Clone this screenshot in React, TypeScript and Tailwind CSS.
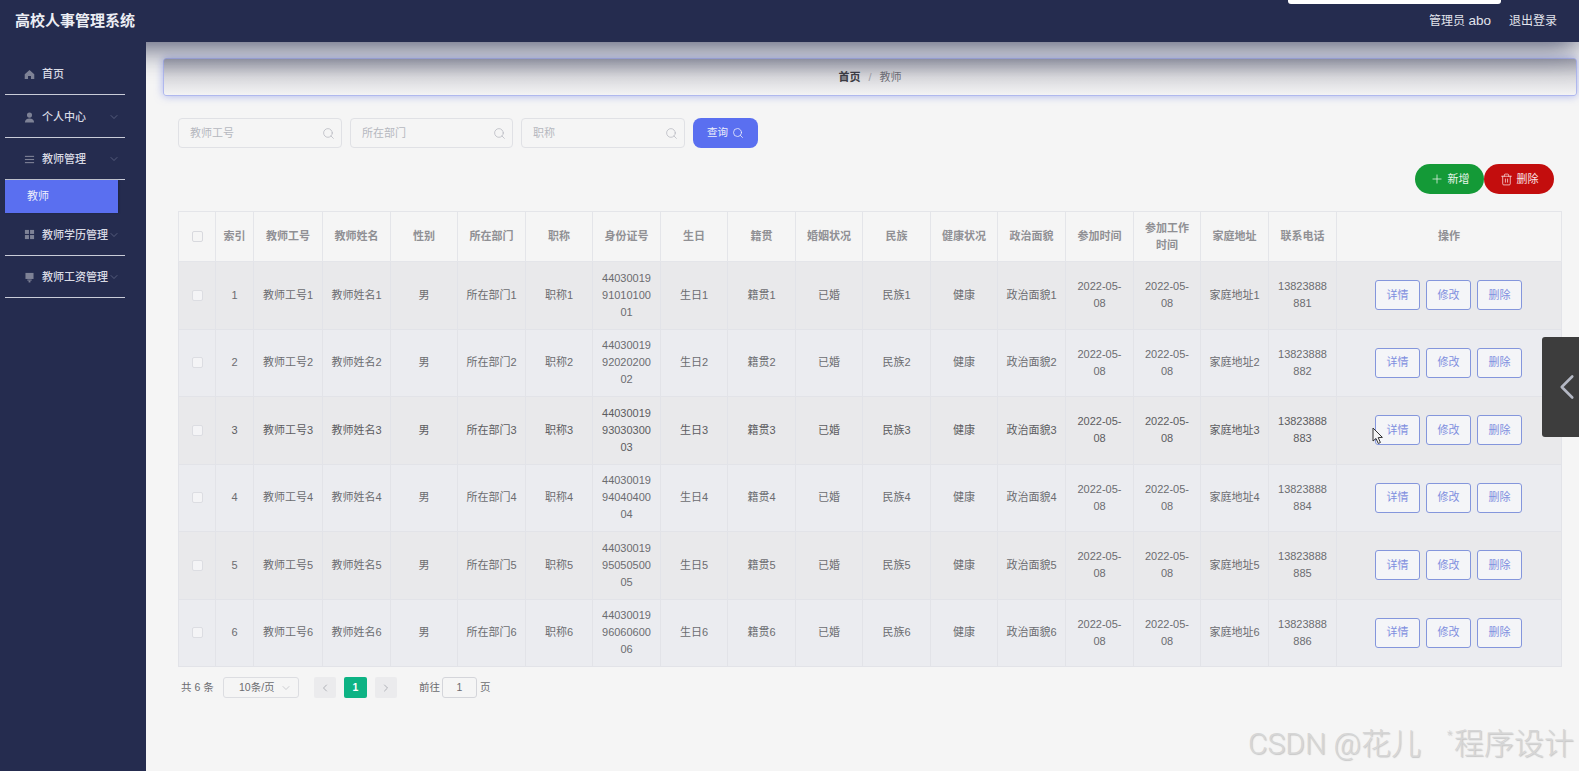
import React from "react";
import { ChevronDown, ChevronLeft, ChevronRight, Plus, Search, Trash2 } from "lucide-react";

const font = { fontFamily: '"Liberation Sans", "Noto Sans CJK SC", sans-serif' };

const columns = [
  { title: "教师工号", width: "w-[69px]" },
  { title: "教师姓名", width: "w-[68px]" },
  { title: "性别", width: "w-[67px]" },
  { title: "所在部门", width: "w-[68px]" },
  { title: "职称", width: "w-[67px]" },
  { title: "身份证号", width: "w-[68px]" },
  { title: "生日", width: "w-[67px]" },
  { title: "籍贯", width: "w-[68px]" },
  { title: "婚姻状况", width: "w-[67px]" },
  { title: "民族", width: "w-[68px]" },
  { title: "健康状况", width: "w-[67px]" },
  { title: "政治面貌", width: "w-[68px]" },
  { title: "参加时间", width: "w-[68px]" },
  { title: "参加工作时间", width: "w-[67px]" },
  { title: "家庭地址", width: "w-[68px]" },
  { title: "联系电话", width: "w-[68px]" },
];

const rows = [1, 2, 3, 4, 5, 6].map((n) => ({
  id: n,
  cells: [
    `教师工号${n}`,
    `教师姓名${n}`,
    "男",
    `所在部门${n}`,
    `职称${n}`,
    `440300199${n}0${n}0${n}00${"0" + n}`,
    `生日${n}`,
    `籍贯${n}`,
    "已婚",
    `民族${n}`,
    "健康",
    `政治面貌${n}`,
    "2022-05-08",
    "2022-05-08",
    `家庭地址${n}`,
    `1382388888${n}`,
  ],
}));

const HomeIcon = () => (
  <svg viewBox="0 0 12 12" className="w-[11px] h-[11px] shrink-0 fill-[#7e8296]">
    <path d="M6 1 L11.2 5.6 V11 H7.6 V7.6 H4.4 V11 H0.8 V5.6 Z" />
  </svg>
);
const UserIcon = () => (
  <svg viewBox="0 0 12 12" className="w-[11px] h-[11px] shrink-0 fill-[#7e8296]">
    <circle cx="6" cy="3.4" r="2.8" />
    <path d="M1 11.5 C1 8.4 3 7 6 7 C9 7 11 8.4 11 11.5 Z" />
  </svg>
);
const ListIcon = () => (
  <svg viewBox="0 0 12 12" className="w-[11px] h-[11px] shrink-0 fill-[#7e8296]">
    <rect x="1" y="2" width="10" height="1.2" />
    <rect x="1" y="5.4" width="10" height="1.2" />
    <rect x="1" y="8.8" width="10" height="1.2" />
  </svg>
);
const GridIcon = () => (
  <svg viewBox="0 0 12 12" className="w-[11px] h-[11px] shrink-0 fill-[#7e8296]">
    <rect x="1" y="1" width="4.4" height="4.4" />
    <rect x="6.6" y="1" width="4.4" height="4.4" />
    <rect x="1" y="6.6" width="4.4" height="4.4" />
    <rect x="6.6" y="6.6" width="4.4" height="4.4" />
  </svg>
);
const BoardIcon = () => (
  <svg viewBox="0 0 12 12" className="w-[11px] h-[11px] shrink-0 fill-[#7e8296]">
    <rect x="1.6" y="1" width="8.8" height="6.6" />
    <rect x="3.6" y="8.2" width="4.8" height="1.2" />
    <rect x="5" y="9.4" width="2" height="2" />
  </svg>
);

const menu = [
  { label: "首页", icon: <HomeIcon />, arrow: false },
  { label: "个人中心", icon: <UserIcon />, arrow: true },
  { label: "教师管理", icon: <ListIcon />, arrow: true, open: true },
  { label: "教师学历管理", icon: <GridIcon />, arrow: true },
  { label: "教师工资管理", icon: <BoardIcon />, arrow: true },
];

const SearchBox = ({ placeholder, width }: { placeholder: string; width: string }) => (
  <div className={`${width} h-[30px] flex items-center justify-between pl-[11px] pr-[6px] border border-[#e0e1e5] rounded-[4px] bg-[#f5f5f5]`}>
    <span className="text-[11px] text-[#b6b8bf]">{placeholder}</span>
    <Search size={13} strokeWidth={1.4} className="text-[#b6b8bf]" />
  </div>
);

export default function App() {
  return (
    <div className="relative flex flex-col h-screen overflow-hidden bg-[#f5f5f5]" style={font}>
      {/* top bar */}
      <header className="relative z-10 h-[42px] shrink-0 flex items-center justify-between pl-[15px] pr-[22px] bg-[#252c4f] shadow-[0_6px_30px_rgba(37,44,79,0.8)]">
        <div className="text-[15px] font-bold text-[#eceef4]">高校人事管理系统</div>
        <div className="flex items-center gap-[18px] text-[12px] text-[#e2e4ec]">
          <span>
            管理员 <span className="text-[13.5px]">abo</span>
          </span>
          <span>退出登录</span>
        </div>
      </header>

      <div className="flex flex-1 min-h-0">
        {/* side menu */}
        <aside className="relative z-20 w-[146px] shrink-0 bg-[#252c4f] pt-[11px] pl-[5px]">
          {menu.map((item) => (
            <React.Fragment key={item.label}>
              <div className="w-[120px] h-[42.4px] flex items-center pt-[2px] pl-[19px] border-b border-[#c9ccd8]">
                {item.icon}
                <span className="ml-[7px] text-[11px] font-medium text-[#d8dae4] whitespace-nowrap">{item.label}</span>
                {item.arrow && <ChevronDown size={12} strokeWidth={1.2} className="ml-auto mr-[5px] shrink-0 text-[#767c98]" />}
              </div>
              {item.open && (
                <div className="w-[113px] h-[33px] flex items-center pl-[22px] bg-[#5a6ff0] text-[11px] text-[#eef0fb] shadow-[1px_0_2px_rgba(0,0,0,0.2)]">
                  教师
                </div>
              )}
            </React.Fragment>
          ))}
        </aside>

        <main className="flex-1 min-w-0 pl-[17px] pr-[2px] pt-4">
          {/* breadcrumb */}
          <div className="h-[38px] flex items-center justify-center gap-2 rounded-[3px] border border-[#b0b8ee] bg-gradient-to-b from-[#a6a7b1] via-[#d9d9dd] to-[#f3f3f4] shadow-[0_0_8px_rgba(120,135,230,0.6)] text-[11px]">
            <span className="font-bold text-[#3c3c44]">首页</span>
            <span className="text-[#a0a0a6]">/</span>
            <span className="text-[#6e6e76]">教师</span>
          </div>

          <div className="ml-[15px] mr-[15px]">
            {/* search */}
            <div className="mt-[22px] flex items-center gap-2">
              <SearchBox placeholder="教师工号" width="w-[164px]" />
              <SearchBox placeholder="所在部门" width="w-[163px]" />
              <SearchBox placeholder="职称" width="w-[164px]" />
              <button className="w-[65px] h-[30px] flex items-center justify-center gap-[4px] rounded-lg bg-[#5a6ff0] text-[10.5px] text-[#eef0fb]">
                查询
                <Search size={12} strokeWidth={1.6} />
              </button>
            </div>

            {/* actions */}
            <div className="mt-4 pr-[8px] flex justify-end">
              <button className="w-[69px] h-[30px] flex items-center justify-center gap-1 rounded-full bg-[#149a37] text-[11px] text-[#e8f5ea]">
                <Plus size={14} strokeWidth={1.3} />
                新增
              </button>
              <button className="w-[70px] h-[30px] flex items-center justify-center gap-1 rounded-full bg-[#c30d0d] text-[11px] text-[#f8e4e4]">
                <Trash2 size={13} strokeWidth={1.4} />
                删除
              </button>
            </div>

            {/* table */}
            <table className="mt-[17px] w-[1384px] table-fixed border-collapse text-[11px] leading-[17px] text-center">
              <colgroup>
                <col className="w-[37px]" />
                <col className="w-[38px]" />
                {columns.map((c) => (
                  <col key={c.title} className={c.width} />
                ))}
                <col />
              </colgroup>
              <thead>
                <tr className="h-[50px] text-[#909094]">
                  <th className="border border-[#e4e5e9] font-bold">
                    <div className="mx-auto w-[11px] h-[11px] rounded-[2px] border border-[#d8d9de] bg-[#f5f5f5]" />
                  </th>
                  <th className="border border-[#e4e5e9] font-bold">索引</th>
                  {columns.map((c) => (
                    <th key={c.title} className="border border-[#e4e5e9] px-2 font-bold">
                      {c.title}
                    </th>
                  ))}
                  <th className="border border-[#e4e5e9] font-bold">操作</th>
                </tr>
              </thead>
              <tbody>
                {rows.map((row) => (
                  <tr
                    key={row.id}
                    className={`h-[67.5px] ${row.id % 2 === 1 ? "bg-[#e9e9eb]" : "bg-[#ebecf0]"} ${row.id === 3 ? "text-[#5c5c60]" : "text-[#6c6c70]"}`}
                  >
                    <td className="border border-[#e2e3e8]">
                      <div className="mx-auto w-[11px] h-[11px] rounded-[2px] border border-[#dcdde2] bg-[#f4f4f6]" />
                    </td>
                    <td className="border border-[#e2e3e8]">{row.id}</td>
                    {row.cells.map((cell, i) => (
                      <td
                        key={i}
                        className={`border border-[#e2e3e8] px-2 ${i === 5 || i === 15 ? "break-all" : ""}`}
                      >
                        {cell}
                      </td>
                    ))}
                    <td className="border border-[#e2e3e8]">
                      <div className="pl-[38px] flex gap-[6px]">
                        {["详情", "修改", "删除"].map((label) => (
                          <button
                            key={label}
                            className="w-[45px] h-[30px] rounded-[3px] border border-[#8496dc] bg-[#f4f5f8] text-[11px] text-[#7f8fdf]"
                          >
                            {label}
                          </button>
                        ))}
                      </div>
                    </td>
                  </tr>
                ))}
              </tbody>
            </table>

            {/* pagination */}
            <div className="mt-[10px] pl-[3px] flex items-center text-[10.5px] text-[#6c6c70]">
              <span className="w-[32px] whitespace-nowrap">共 6 条</span>
              <div className="ml-[10px] w-[76px] h-[21px] flex items-center justify-between pl-[15px] pr-[6px] rounded-[3px] border border-[#dcdde1]">
                <span>10条/页</span>
                <ChevronDown size={12} strokeWidth={1.2} className="text-[#b0b2b8]" />
              </div>
              <div className="ml-[15px] w-[22px] h-[21px] flex items-center justify-center rounded-[2px] bg-[#ebebed] text-[#b0b2b8]">
                <ChevronLeft size={12} />
              </div>
              <div className="ml-2 w-[23px] h-[21px] flex items-center justify-center rounded-[2px] bg-[#0db384] font-bold text-white">
                1
              </div>
              <div className="ml-2 w-[22px] h-[21px] flex items-center justify-center rounded-[2px] bg-[#ebebed] text-[#b0b2b8]">
                <ChevronRight size={12} />
              </div>
              <span className="ml-[22px]">前往</span>
              <div className="ml-[2px] w-[35px] h-[21px] flex items-center justify-center rounded-[3px] border border-[#d4d5da]">
                1
              </div>
              <span className="ml-[3px]">页</span>
            </div>
          </div>
        </main>
      </div>

      {/* white strip over the top bar */}
      <div className="absolute z-30 left-[1288px] top-0 w-[213px] h-[4px] bg-white rounded-b-[3px]" />

      {/* side drawer handle */}
      <div className="absolute z-30 right-0 top-[337px] w-[37px] h-[100px] flex items-center justify-center pl-[13px] overflow-hidden rounded-l-[3px] bg-[#3d3d3d]">
        <ChevronLeft size={42} strokeWidth={1.5} className="shrink-0 text-[#b4b8c4]" />
      </div>

      {/* mouse pointer */}
      <svg viewBox="0 0 12 18" className="absolute z-30 left-[1372px] top-[427px] w-[12px] h-[18px]">
        <path d="M1 1 V14 L4 11.5 L6.3 16.5 L8.4 15.5 L6.2 10.6 L10.4 10.4 Z" fill="#f4f4f4" stroke="#333" strokeWidth="1" />
      </svg>

      {/* watermark */}
      <div
        className="absolute z-30 right-[5px] top-[725px] flex items-start text-[30px] leading-[38px] font-light whitespace-nowrap text-[#d6d6d6] [text-shadow:1px_1px_1px_rgba(130,130,130,0.4)]"
        style={{ fontFamily: 'Roboto, "Noto Sans CJK SC", sans-serif' }}
      >
        <span>CSDN @花儿</span>
        <span className="ml-[26px] w-[7px] text-[12px] leading-[20px]">*</span>
        <span>程序设计</span>
      </div>
    </div>
  );
}
